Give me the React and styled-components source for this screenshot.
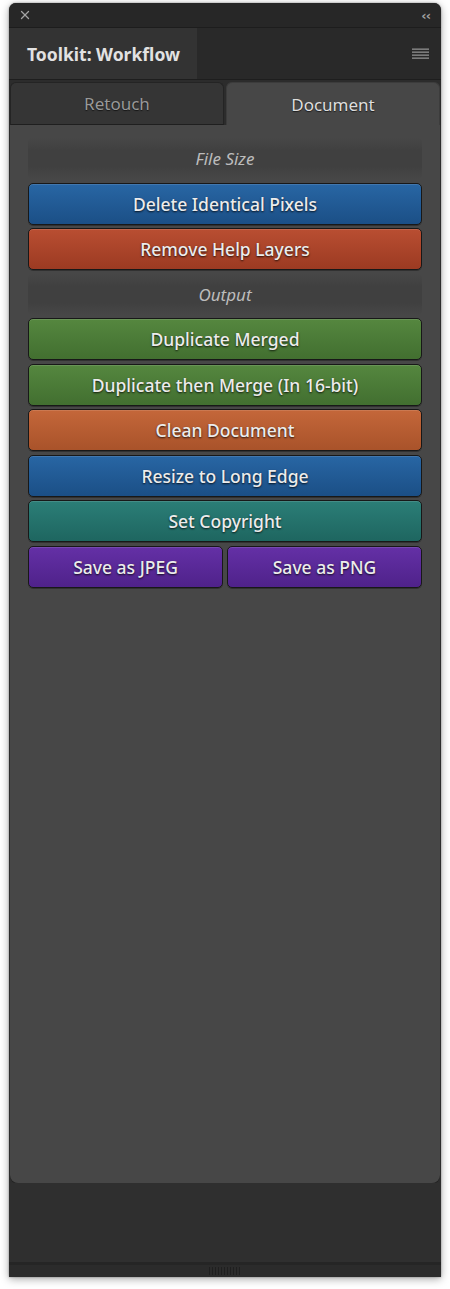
import React from 'react';
import styled, { createGlobalStyle } from 'styled-components';
import { X } from 'lucide-react';

const GlobalStyle = createGlobalStyle`
  html, body {
    margin: 0;
    padding: 0;
    background: #ffffff;
  }
  * { box-sizing: border-box; }
`;

const Page = styled.div`
  padding: 3px 9px 12px 9px;
  font-family: "Noto Sans", "Open Sans", sans-serif;
`;

const Panel = styled.div`
  width: 432px;
  height: 1274px;
  display: flex;
  flex-direction: column;
  background: #2e2e2e;
  border-radius: 7px 7px 0 0;
  overflow: hidden;
  box-shadow: 0 2px 8px rgba(0, 0, 0, 0.35), 0 0 2px rgba(0, 0, 0, 0.4);
`;

const TopBar = styled.div`
  height: 24px;
  flex: none;
  display: flex;
  align-items: center;
  justify-content: space-between;
  padding: 0 11px 0 9px;
  background: #272727;
  color: #9a9a9a;
`;

const Collapse = styled.span`
  font-size: 13px;
  letter-spacing: -1px;
  font-weight: 700;
  font-family: "DejaVu Sans", sans-serif;
  color: #a0a0a0;
`;

const HeaderRow = styled.div`
  height: 52px;
  flex: none;
  display: flex;
  align-items: stretch;
  justify-content: space-between;
  background: #292929;
  border-top: 1px solid #1d1d1d;
`;

const HeaderTab = styled.div`
  width: 188px;
  display: flex;
  align-items: center;
  padding-left: 18px;
  background: #333333;
  color: #e2e2e2;
  font-weight: 700;
  font-size: 17.5px;
`;

const MenuButton = styled.div`
  display: flex;
  align-items: center;
  padding-right: 12px;
`;

const SubTabs = styled.div`
  height: 46px;
  flex: none;
  display: flex;
  gap: 2px;
  padding: 2px 1px 0 1px;
  background: #2c2c2c;
  border-top: 1px solid #1e1e1e;
`;

const SubTab = styled.div`
  flex: 1;
  display: flex;
  align-items: center;
  justify-content: center;
  border-radius: 6px 6px 0 0;
  font-size: 17px;
  color: ${p => (p.$active ? '#dedede' : '#999999')};
  background: ${p => (p.$active ? '#474747' : '#353535')};
  border: 1px solid ${p => (p.$active ? '#3c3c3c' : '#242424')};
  border-bottom: ${p => (p.$active ? 'none' : '1px solid #1f1f1f')};
  text-shadow: 0 1px 1px rgba(0, 0, 0, 0.6);
`;

const Content = styled.div`
  flex: 1;
  margin: 0 1px;
  padding: 13px 18px;
  background: #474747;
  border-radius: 0 0 8px 8px;
  box-shadow: 0 1px 0 #222;
  display: flex;
  flex-direction: column;
  gap: 3.5px;
`;

const SectionTitle = styled.div`
  height: 41px;
  flex: none;
  display: flex;
  align-items: center;
  justify-content: center;
  font-style: italic;
  font-size: 17px;
  color: #bcbcbc;
  border-radius: 4px;
  background: linear-gradient(#474747, #404040 30%, #404040 70%, #474747);
`;

const Row = styled.div`
  display: flex;
  gap: 4px;
`;

const colors = {
  blue: ['#2866a4', '#1b4f86'],
  red: ['#b94e32', '#9c3a22'],
  green: ['#55873f', '#426f30'],
  orange: ['#c4673a', '#a9532a'],
  teal: ['#2b7e77', '#1e6660'],
  purple: ['#6430a6', '#4f228a'],
};

const ActionButton = styled.button`
  flex: ${p => (p.$half ? '1' : 'none')};
  height: 42px;
  border: 1px solid #181818;
  border-radius: 5px;
  background: linear-gradient(${p => colors[p.$tone][0]}, ${p => colors[p.$tone][1]});
  box-shadow: inset 0 1px 0 rgba(255, 255, 255, 0.12), 0 1px 0 rgba(0, 0, 0, 0.3);
  color: #ececec;
  font-family: "Noto Sans", "Open Sans", sans-serif;
  font-size: 17.5px;
  font-weight: 500;
  text-shadow: 0 1px 2px rgba(0, 0, 0, 0.8);
  padding: 0;
  cursor: pointer;
`;

const Footer = styled.div`
  height: 79px;
  flex: none;
  background: #2f2f2f;
`;

const GripBar = styled.div`
  height: 15px;
  flex: none;
  display: flex;
  justify-content: center;
  align-items: center;
  background: #2b2b2b;
  border-top: 3px solid #252525;
`;

const Grip = styled.div`
  width: 33px;
  height: 8px;
  background: repeating-linear-gradient(90deg, #1f1f1f 0 1px, transparent 1px 3px);
`;

const MenuIcon = () => (
  <svg width="17" height="11" viewBox="0 0 17 11">
    {[0.5, 3.5, 6.5, 9.5].map(y => (
      <rect key={y} x="0" y={y} width="17" height="1.3" fill="#8f8f8f" />
    ))}
  </svg>
);

export default function App() {
  return (
    <Page>
      <GlobalStyle />
      <Panel>
        <TopBar>
          <X size={14} strokeWidth={2.2} color="#a3a3a3" />
          <Collapse>‹‹</Collapse>
        </TopBar>
        <HeaderRow>
          <HeaderTab>Toolkit: Workflow</HeaderTab>
          <MenuButton><MenuIcon /></MenuButton>
        </HeaderRow>
        <SubTabs>
          <SubTab>Retouch</SubTab>
          <SubTab $active>Document</SubTab>
        </SubTabs>
        <Content>
          <SectionTitle>File Size</SectionTitle>
          <ActionButton $tone="blue">Delete Identical Pixels</ActionButton>
          <ActionButton $tone="red">Remove Help Layers</ActionButton>
          <SectionTitle>Output</SectionTitle>
          <ActionButton $tone="green">Duplicate Merged</ActionButton>
          <ActionButton $tone="green">Duplicate then Merge (In 16-bit)</ActionButton>
          <ActionButton $tone="orange">Clean Document</ActionButton>
          <ActionButton $tone="blue">Resize to Long Edge</ActionButton>
          <ActionButton $tone="teal">Set Copyright</ActionButton>
          <Row>
            <ActionButton $tone="purple" $half>Save as JPEG</ActionButton>
            <ActionButton $tone="purple" $half>Save as PNG</ActionButton>
          </Row>
        </Content>
        <Footer />
        <GripBar><Grip /></GripBar>
      </Panel>
    </Page>
  );
}
